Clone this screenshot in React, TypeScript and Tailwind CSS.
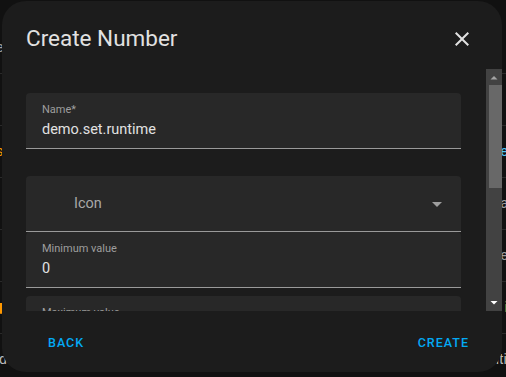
const bgRows = [
  { left: "e", leftColor: "text-[#9e9e9e]", right: "", rightColor: "" },
  { left: "l", leftColor: "text-[#2196f3]", right: "", rightColor: "" },
  { left: "s", leftColor: "text-[#ff9800]", right: "e", rightColor: "text-[#4fc3f7]" },
  { left: "", leftColor: "", right: "a", rightColor: "text-[#9e9e9e]" },
  { left: "", leftColor: "", right: "e", rightColor: "text-[#9e9e9e]" },
  { left: "▮", leftColor: "text-[#ff9800]", right: "i", rightColor: "text-[#f0c040]" },
];

function Field({ label, value }: { label: string; value: string }) {
  return (
    <div className="h-[56px] shrink-0 rounded-t-[4px] bg-[#282828] border-b border-[#9a9a9a] px-4 flex flex-col pt-[10px]">
      <span className="text-[11px] leading-[14px] text-[#9e9e9e]">{label}</span>
      <span className="text-[14.5px] leading-[20px] text-[#e1e1e1] mt-[3px]">{value}</span>
    </div>
  );
}

export default function App() {
  return (
    <div className="relative w-[506px] h-[377px] overflow-hidden bg-[#111111] font-['Roboto',sans-serif]">
      {/* page behind the dialog */}
      <div className="flex flex-col pt-[22px]">
        {bgRows.map((r, i) => (
          <div key={i} className="h-[52px] border-b border-[#2a2a2a] flex items-center justify-between text-[14px]">
            <span className={`-ml-[4px] ${r.leftColor}`}>{r.left}</span>
            <span className={`-mr-[2px] ${r.rightColor}`}>{r.right}</span>
          </div>
        ))}
        <div className="h-[43px] pt-[8px] flex items-center justify-between text-[14px] text-[#bdbdbd]">
          <span className="-ml-[1px]">da</span>
          <span className="-mr-[1px]">nti</span>
        </div>
      </div>

      {/* dialog */}
      <div className="absolute left-[2px] top-[1px] w-[500px] h-[371px] rounded-[24px] bg-[#1c1c1c] flex flex-col overflow-hidden">
        <div className="h-[68px] shrink-0 flex items-center justify-between pl-6 pr-[28px] pt-[8px]">
          <h2 className="text-[22.5px] text-[#e1e1e1] font-normal">Create Number</h2>
          <svg width="24" height="24" viewBox="0 0 24 24" className="fill-[#e1e1e1]">
            <path d="M19,6.41L17.59,5L12,10.59L6.41,5L5,6.41L10.59,12L5,17.59L6.41,19L12,13.41L17.59,19L19,17.59L13.41,12L19,6.41Z" />
          </svg>
        </div>

        <div className="h-[242px] shrink-0 flex">
          <div className="flex-1 overflow-hidden pl-6 pr-[25px] pt-6 flex flex-col">
            <Field label="Name*" value="demo.set.runtime" />
            <div className="mt-[27px] h-[56px] shrink-0 rounded-t-[4px] bg-[#282828] border-b border-[#9a9a9a] flex items-center pl-[48px] pr-[12px]">
              <span className="flex-1 text-[14.5px] text-[#a8a8a8]">Icon</span>
              <svg width="24" height="24" viewBox="0 0 24 24" className="fill-[#9e9e9e]">
                <path d="M7,10L12,15L17,10H7Z" />
              </svg>
            </div>
            <Field label="Minimum value" value="0" />
            <div className="mt-[8px] shrink-0">
              <Field label="Maximum value" value="100" />
            </div>
          </div>
          <div className="w-[16px] bg-[#424242] flex flex-col items-center">
            <svg width="16" height="16" viewBox="0 0 16 16" className="fill-[#a3a3a3]">
              <path d="M4.5,10.5L8,7L11.5,10.5Z" />
            </svg>
            <div className="w-[13px] ml-[2px] h-[103px] bg-[#686868]" />
            <div className="flex-1" />
            <svg width="16" height="16" viewBox="0 0 16 16" className="fill-[#ffffff]">
              <path d="M4.5,6L8,9.5L11.5,6Z" />
            </svg>
          </div>
        </div>

        <div className="flex-1 flex items-center justify-between pl-[46px] pr-[33px] pt-[3px]">
          <button className="text-[12.5px] font-medium tracking-[1px] text-[#03a9f4]">BACK</button>
          <button className="text-[12.5px] font-medium tracking-[1px] text-[#03a9f4]">CREATE</button>
        </div>
      </div>
    </div>
  );
}
